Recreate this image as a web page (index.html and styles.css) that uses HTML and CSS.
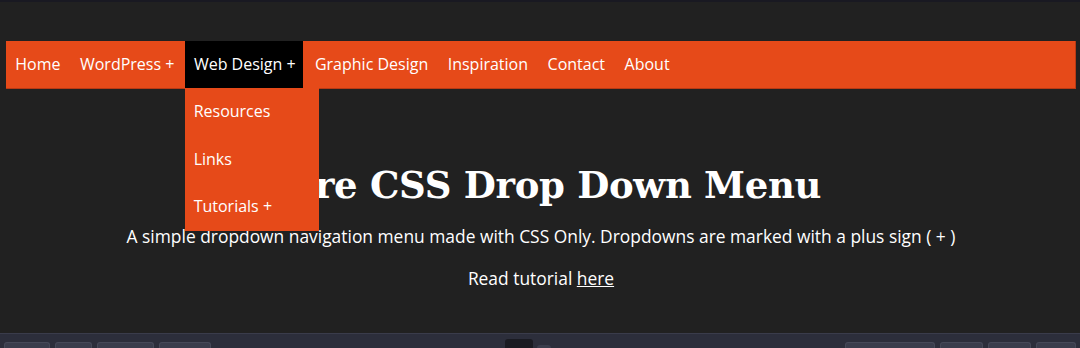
FILE: index.html
```html
<!DOCTYPE html>
<html lang="en">
<head>
<meta charset="utf-8">
<title>Pure CSS Drop Down Menu</title>
<link rel="stylesheet" href="styles.css">
</head>
<body>
<div class="topline"></div>
<div class="page">
  <nav class="menu">
    <ul class="menu-list">
      <li class="menu-item"><a href="#">Home</a></li>
      <li class="menu-item"><a href="#">WordPress +</a></li>
      <li class="menu-item is-open"><a href="#">Web Design +</a>
        <ul class="dropdown">
          <li><a href="#">Resources</a></li>
          <li><a href="#">Links</a></li>
          <li><a href="#">Tutorials +</a></li>
        </ul>
      </li>
      <li class="menu-item"><a href="#">Graphic Design</a></li>
      <li class="menu-item"><a href="#">Inspiration</a></li>
      <li class="menu-item"><a href="#">Contact</a></li>
      <li class="menu-item"><a href="#">About</a></li>
    </ul>
  </nav>
  <header class="intro">
    <h1 class="title">Pure CSS Drop Down Menu</h1>
    <p class="lead">A simple dropdown navigation menu made with CSS Only. Dropdowns are marked with a plus sign ( + )</p>
    <p class="lead">Read tutorial <a href="#">here</a></p>
  </header>
</div>
<div class="devbar">
  <div class="dev-group">
    <span class="dev-btn w46"><i class="ico blue"></i><i class="bit"></i><i class="bit sm"></i></span>
    <span class="dev-btn w37"><i class="ico orange"></i><i class="bit sm"></i></span>
    <span class="dev-btn w57"><i class="ico blue"></i><i class="bit"></i><i class="bit sm"></i></span>
    <span class="dev-btn w52"><i class="ico red"></i><i class="bit"></i><i class="bit sm"></i></span>
  </div>
  <div class="dev-mid">
    <span class="dev-dark"></span>
    <span class="dev-tiny"></span>
  </div>
  <div class="dev-group">
    <span class="dev-btn w90"><i class="ico blue"></i><i class="bit"></i><i class="bit sm"></i></span>
    <span class="dev-btn w43"><i class="ico red"></i><i class="bit sm"></i></span>
    <span class="dev-btn w43"><i class="ico blue"></i><i class="bit sm"></i></span>
    <span class="dev-btn w40"><i class="ico red"></i><i class="bit sm"></i></span>
  </div>
</div>
</body>
</html>
```
FILE: styles.css
```css
html, body {
  margin: 0;
  padding: 0;
  height: 100%;
}
body {
  background: #212121;
  color: #fff;
  font-family: "Open Sans", "Noto Sans", sans-serif;
  display: flex;
  flex-direction: column;
  overflow: hidden;
}
.topline {
  height: 2px;
  background: #191922;
  flex: none;
}
.page {
  flex: 1;
  padding: 39px 4px 0 6px;
}
.menu {
  background: #e64a19;
  border-right: 1px solid #b83a14;
  border-bottom: 1px solid #b83a14;
  height: 47px;
}
.menu-list {
  list-style: none;
  margin: 0;
  padding: 0;
  display: flex;
}
.menu-item {
  position: relative;
}
.menu-item > a {
  display: block;
  padding: 0 10.25px 0 9.25px;
  line-height: 47px;
  font-size: 16px;
  color: #fff;
  text-decoration: none;
}
.is-open {
  margin-right: 3px;
}
.is-open > a {
  background: #000;
  padding-right: 7px;
}
.dropdown {
  position: absolute;
  top: 47px;
  left: 0;
  width: 134px;
  margin: 0;
  padding: 0;
  list-style: none;
  background: #e64a19;
  z-index: 2;
}
.dropdown a {
  display: block;
  padding: 0 9px;
  line-height: 47.5px;
  font-size: 16px;
  color: #fff;
  text-decoration: none;
}
.intro {
  text-align: center;
}
.title {
  margin: 66px 0 0;
  font-family: "DejaVu Serif", serif;
  font-weight: bold;
  font-size: 37px;
  line-height: 60px;
  letter-spacing: -0.3px;
}
.lead {
  margin: 0;
  font-size: 17.4px;
  line-height: 42px;
}
.lead a {
  color: #fff;
  text-decoration: underline;
}
.devbar {
  flex: none;
  height: 6px;
  background: #2c2e3b;
  border-top: 1px solid #3a3c4b;
  display: flex;
  justify-content: space-between;
  align-items: flex-start;
  overflow: hidden;
  padding-top: 8px;
}
.dev-group {
  display: flex;
  gap: 5px;
  padding: 0 4px;
}
.dev-btn {
  display: flex;
  align-items: flex-end;
  gap: 4px;
  flex: none;
  height: 8px;
  background: #3a3d4c;
  border: 1px solid #464958;
  border-bottom: none;
  border-radius: 3px 3px 0 0;
  padding: 0 0 0 7px;
  box-sizing: border-box;
  overflow: hidden;
}
.ico {
  display: block;
  width: 5px;
  height: 2px;
  background: #8fa8d8;
}
.ico.orange { background: #d8a070; }
.ico.red { background: #d87080; }
.bit {
  display: block;
  width: 10px;
  height: 1px;
  background: #9a9cab;
}
.bit.sm {
  width: 3px;
  height: 2px;
  background: #c0a080;
  margin-left: auto;
  margin-right: 6px;
}
.w46 { width: 46px; }
.w37 { width: 37px; }
.w57 { width: 57px; }
.w52 { width: 52px; }
.w90 { width: 90px; }
.w43 { width: 43px; }
.w40 { width: 40px; }
.dev-mid {
  display: flex;
  align-items: flex-start;
  gap: 4px;
  margin-top: -3px;
}
.dev-dark {
  display: block;
  width: 28px;
  height: 16px;
  background: #1a1b22;
  border-radius: 3px;
}
.dev-tiny {
  display: block;
  width: 14px;
  height: 10px;
  margin-top: 6px;
  background: #3a3d4c;
  border-radius: 3px;
}
```
